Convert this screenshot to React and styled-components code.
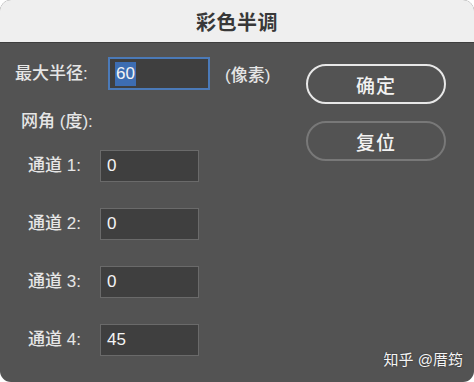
import React from "react";
import styled, { createGlobalStyle } from "styled-components";

const GlobalStyle = createGlobalStyle`
  html, body {
    margin: 0;
    padding: 0;
    background: #ffffff;
  }
  body {
    font-family: "Liberation Sans", "Noto Sans CJK SC", sans-serif;
  }
`;

const Dialog = styled.div`
  position: relative;
  width: 474px;
  height: 382px;
  border-radius: 11px;
  overflow: hidden;
  background: #535353;
  display: flex;
  flex-direction: column;
`;

const TitleBar = styled.div`
  height: 43px;
  flex: none;
  background: #efefef;
  border-bottom: 1px solid #3e3e3e;
  box-sizing: border-box;
  display: flex;
  align-items: center;
  justify-content: center;
  color: #383838;
  font-size: 20px;
  font-weight: 700;
  letter-spacing: 0.5px;
`;

const Body = styled.div`
  flex: 1;
  display: flex;
  padding: 14px 0 0 15px;
  color: #e6e6e6;
`;

const Form = styled.div`
  width: 291px;
  display: flex;
  flex-direction: column;
`;

const Row = styled.div`
  display: flex;
  align-items: center;
  padding-left: ${(p) => p.$indent || 0}px;
  margin-top: ${(p) => p.$top || 0}px;
`;

const Label = styled.span`
  width: ${(p) => p.$width}px;
  flex: none;
  font-size: 17px;
  font-weight: 500;
  line-height: 20px;
  white-space: pre;
`;

const Section = styled.div`
  margin: 22px 0 0 6px;
  font-size: 17px;
  font-weight: 500;
  line-height: 20px;
`;

const Field = styled.div`
  width: ${(p) => p.$width}px;
  height: ${(p) => p.$height}px;
  box-sizing: border-box;
  background: #3f3f3f;
  border: ${(p) => (p.$focus ? "2px solid #4b7ab8" : "1px solid #6a6a6a")};
  display: flex;
  align-items: center;
  padding-left: ${(p) => (p.$focus ? 5 : 6)}px;
  font-size: 17px;
  font-weight: 500;
  color: #f4f4f4;
`;

const Selected = styled.span`
  background: #3d6db2;
  padding: 1px 1px;
  line-height: 22px;
`;

const Unit = styled.span`
  margin-left: 15px;
  font-size: 17px;
  font-weight: 500;
`;

const Buttons = styled.div`
  padding-top: 7px;
  display: flex;
  flex-direction: column;
  gap: 17px;
`;

const Button = styled.button`
  width: 140px;
  height: 40px;
  border-radius: 20px;
  background: transparent;
  border: ${(p) => (p.$primary ? "2px solid #e8e8e8" : "2px solid #787878")};
  color: #f2f2f2;
  font-family: "Noto Sans CJK SC", sans-serif;
  font-size: 19px;
  font-weight: 500;
  letter-spacing: 1px;
  padding: 0;
`;

const Watermark = styled.div`
  position: absolute;
  right: 11px;
  bottom: 13px;
  color: #f4f4f4;
  font-size: 15px;
  text-shadow: 0 0 2px rgba(0, 0, 0, 0.5);
`;

const channels = ["0", "0", "0", "45"];

export default function App() {
  return (
    <>
      <GlobalStyle />
      <Dialog>
        <TitleBar>彩色半调</TitleBar>
        <Body>
          <Form>
            <Row>
              <Label $width={93}>最大半径:</Label>
              <Field $width={102} $height={33} $focus>
                <Selected>60</Selected>
              </Field>
              <Unit>(像素)</Unit>
            </Row>
            <Section>网角 (度):</Section>
            {channels.map((v, i) => (
              <Row key={i} $indent={13} $top={i === 0 ? 18 : 26}>
                <Label $width={72}>{`通道 ${i + 1}:`}</Label>
                <Field $width={99} $height={32}>
                  {v}
                </Field>
              </Row>
            ))}
          </Form>
          <Buttons>
            <Button $primary>确定</Button>
            <Button>复位</Button>
          </Buttons>
        </Body>
        <Watermark>知乎 @厝筠</Watermark>
      </Dialog>
    </>
  );
}
